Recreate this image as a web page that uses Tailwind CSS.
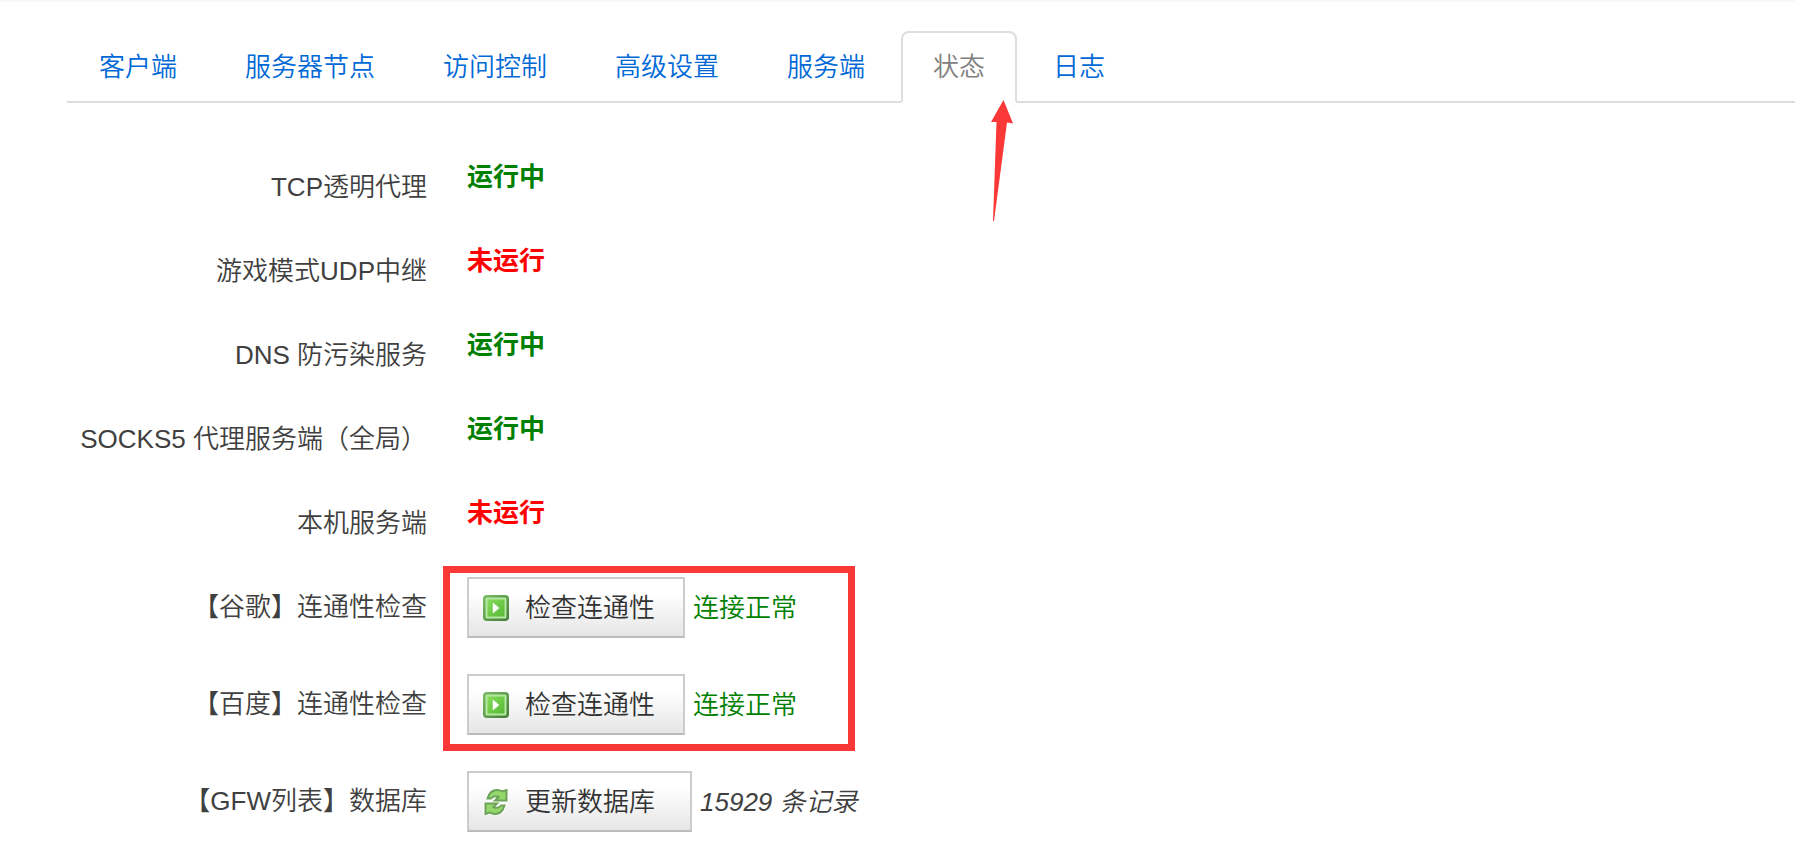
<!DOCTYPE html>
<html lang="zh-CN">
<head>
<meta charset="utf-8">
<meta name="viewport" content="width=device-width, initial-scale=1">
<title>状态</title>
<script src="https://cdn.jsdelivr.net/npm/@tailwindcss/browser@4"></script>
</head>
<body class="min-h-screen overflow-x-hidden border-t-2 border-[#f8f8f8] bg-white pl-[67px] pt-[29px] font-['Liberation_Sans','Noto_Sans_CJK_SC',sans-serif] text-[26px] leading-9 font-normal text-[#404040]">
<svg class="absolute size-0" aria-hidden="true">
  <defs>
    <linearGradient id="face" x1="0" y1="0" x2="1" y2="1"><stop offset="0" stop-color="#86dc5a"/><stop offset="1" stop-color="#55b935"/></linearGradient>
    <linearGradient id="rim" x1="0" y1="0" x2="1" y2="1"><stop offset="0" stop-color="#7cbd69"/><stop offset="1" stop-color="#447a37"/></linearGradient>
    <symbol id="play" viewBox="0 0 26 26">
      <rect x="0" y="0" width="26" height="26" rx="4" fill="url(#rim)"/>
      <rect x="2.500" y="2.500" width="21" height="21" rx="1.500" fill="#b5e8a0"/>
      <rect x="4.500" y="4.500" width="17" height="17" fill="url(#face)"/>
      <path d="M10 8 16 13l-6 5z" fill="#fff" stroke="#fff" stroke-opacity=".5"/>
    </symbol>
    <symbol id="refresh" viewBox="0 0 26 26">
      <g fill="#fff" stroke="#fff" stroke-width="4" stroke-linejoin="round">
        <path d="M4.500 9.500C6 4 9 1 14 1c2 0 4 .5 5.500 1.500L23.500 1v10.500H12L15.500 8c-3-1.500-5.500-1-7.500 1.500z"/>
        <path d="M21.500 16.500C20 22 17 25 12 25c-2 0-4-.5-5.500-1.500L2.500 25V14.500H14L10.500 18c3 1.500 5.500 1 7.500-1.500z"/>
      </g>
      <g fill="#94d86c" stroke="#6ba257" stroke-width="2">
        <path d="M4.500 9.500C6 4 9 1 14 1c2 0 4 .5 5.500 1.500L23.500 1v10.500H12L15.500 8c-3-1.500-5.500-1-7.500 1.500z"/>
        <path d="M21.500 16.500C20 22 17 25 12 25c-2 0-4-.5-5.500-1.500L2.500 25V14.500H14L10.500 18c3 1.500 5.500 1 7.500-1.500z"/>
      </g>
    </symbol>
  </defs>
</svg>

<nav class="border-b-2 border-[#ddd]">
  <ul class="-mb-0.5 flex gap-1 whitespace-nowrap text-[#0069d6] font-[350]">
    <li><a href="#" class="block border-2 border-transparent px-[30px] py-4">客户端</a></li>
    <li><a href="#" class="block border-2 border-transparent px-[30px] py-4">服务器节点</a></li>
    <li><a href="#" class="block border-2 border-transparent px-[30px] py-4">访问控制</a></li>
    <li><a href="#" class="block border-2 border-transparent px-[30px] py-4">高级设置</a></li>
    <li><a href="#" class="block border-2 border-transparent px-[30px] py-4">服务端</a></li>
    <li class="relative">
      <a href="#" aria-current="page" class="block rounded-t-lg border-2 border-[#ddd] border-b-white bg-white px-[30px] py-4 text-[#808080]">状态</a>
      <svg class="pointer-events-none absolute left-[89px] top-[69px] z-10 h-[124px] w-6" viewBox="0 0 24 124" aria-hidden="true"><path d="M13.500 0 23 23.500 17 22.500 4 121H3L6.500 22 1 22z" fill="#fb3838"/></svg>
    </li>
    <li><a href="#" class="block border-2 border-transparent px-[30px] py-4">日志</a></li>
  </ul>
</nav>

<main class="pt-[42px] font-[350]">
  <dl>
    <div class="flex h-[84px] gap-10"><dt class="w-[360px] whitespace-nowrap pt-6 text-right">TCP透明代理</dt><dd class="pt-3.5 font-bold text-[#008000]">运行中</dd></div>
    <div class="flex h-[84px] gap-10"><dt class="w-[360px] whitespace-nowrap pt-6 text-right">游戏模式UDP中继</dt><dd class="pt-3.5 font-bold text-[#ff0000]">未运行</dd></div>
    <div class="flex h-[84px] gap-10"><dt class="w-[360px] whitespace-nowrap pt-6 text-right">DNS 防污染服务</dt><dd class="pt-3.5 font-bold text-[#008000]">运行中</dd></div>
    <div class="flex h-[84px] gap-10"><dt class="w-[360px] whitespace-nowrap pt-6 text-right">SOCKS5 代理服务端（全局）</dt><dd class="pt-3.5 font-bold text-[#008000]">运行中</dd></div>
    <div class="flex h-[84px] gap-10"><dt class="w-[360px] whitespace-nowrap pt-6 text-right">本机服务端</dt><dd class="pt-3.5 font-bold text-[#ff0000]">未运行</dd></div>
  </dl>

  <div class="relative">
    <div class="flex h-[97px] gap-10">
      <label for="google" class="w-[360px] whitespace-nowrap pt-6 text-right">【谷歌】连通性检查</label>
      <div class="flex items-center gap-2 self-start pt-3">
        <button id="google" type="button" class="flex h-[61px] items-center gap-4 border-2 border-[#ccc] border-b-[#bbb] bg-linear-to-b from-white from-25% to-[#e6e6e6] pl-3.5 pr-7 text-[#333]"><svg class="size-[26px]" aria-hidden="true"><use href="#play"/></svg>检查连通性</button>
        <output for="google" class="text-[#008000]">连接正常</output>
      </div>
    </div>
    <div class="flex h-[97px] gap-10">
      <label for="baidu" class="w-[360px] whitespace-nowrap pt-6 text-right">【百度】连通性检查</label>
      <div class="flex items-center gap-2 self-start pt-3">
        <button id="baidu" type="button" class="flex h-[61px] items-center gap-4 border-2 border-[#ccc] border-b-[#bbb] bg-linear-to-b from-white from-25% to-[#e6e6e6] pl-3.5 pr-7 text-[#333]"><svg class="size-[26px]" aria-hidden="true"><use href="#play"/></svg>检查连通性</button>
        <output for="baidu" class="text-[#008000]">连接正常</output>
      </div>
    </div>
    <div class="pointer-events-none absolute left-[376px] top-px h-[185px] w-[412px] border-[7px] border-[#fb3838]"></div>
  </div>

  <div class="flex h-[97px] gap-10">
    <label for="gfw" class="w-[360px] whitespace-nowrap pt-6 text-right">【GFW列表】数据库</label>
    <div class="flex items-center gap-2 self-start pt-3">
      <button id="gfw" type="button" class="flex h-[61px] items-center gap-4 border-2 border-[#ccc] border-b-[#bbb] bg-linear-to-b from-white from-25% to-[#e6e6e6] pl-3.5 pr-[35px] text-[#333]"><svg class="size-[26px]" aria-hidden="true"><use href="#refresh"/></svg>更新数据库</button>
      <output for="gfw" class="italic">15929 条记录</output>
    </div>
  </div>
</main>
</body>
</html>
